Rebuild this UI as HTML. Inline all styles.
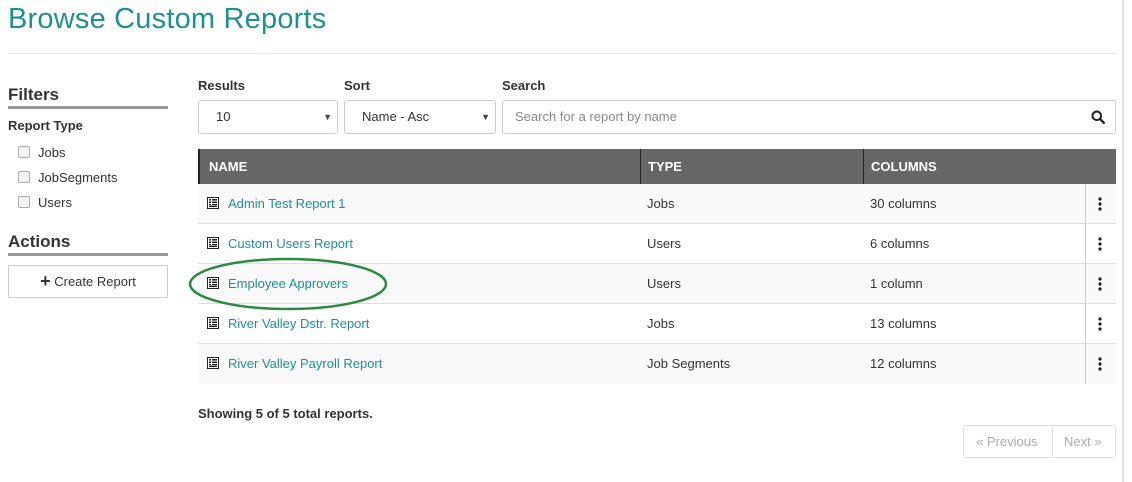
<!DOCTYPE html>
<html><head><meta charset="utf-8"><style>
*{box-sizing:border-box;margin:0;padding:0}
body{width:1132px;height:482px;background:#fff;font-family:"Liberation Sans",sans-serif;color:#333;position:relative;overflow:hidden;font-size:13px}
.a{position:absolute}
h1{position:absolute;left:8px;top:3px;font-weight:normal;font-size:29px;color:#1f8f96;letter-spacing:0.2px}
.hr{left:8px;top:53px;width:1108px;height:1px;background:#e6e6e6}
.vr{left:1122px;top:0;width:2px;height:482px;background:#e0e0e0}
.sec{font-size:17px;font-weight:bold;color:#333;left:8px;width:160px;border-bottom:3px solid #999;padding-bottom:1px}
.cb{width:12px;height:12px;border:1px solid #aaa;border-radius:2px;background:#f4f4f4;left:18px}
.lbl{left:38px;font-size:13px}
.box{border:1px solid #ccc;border-radius:3px;background:#fff}
.th{background:#666;color:#fff;font-weight:bold;font-size:13px;top:149px;height:35px;line-height:35px}
.row{left:198px;width:918px;height:40px;border-bottom:1px solid #ddd}
.cell{line-height:40px;font-size:13px}
.link{color:#1f8f96}
</style></head><body>
<h1>Browse Custom Reports</h1>
<div class="a hr"></div>
<div class="a vr"></div>

<div class="a sec" style="top:85px">Filters</div>
<div class="a" style="left:8px;top:118px;font-weight:bold;font-size:13px">Report Type</div>
<div class="a cb" style="top:146px"></div><div class="a lbl" style="top:145px">Jobs</div>
<div class="a cb" style="top:171px"></div><div class="a lbl" style="top:170px">JobSegments</div>
<div class="a cb" style="top:196px"></div><div class="a lbl" style="top:195px">Users</div>
<div class="a sec" style="top:232px">Actions</div>
<div class="a box" style="left:8px;top:265px;width:160px;height:33px;border-radius:0;text-align:center;line-height:31px;font-size:13px"><b style="font-size:18px;vertical-align:-1px">+</b> Create Report</div>

<div class="a" style="left:198px;top:78px;font-weight:bold">Results</div>
<div class="a" style="left:344px;top:78px;font-weight:bold">Sort</div>
<div class="a" style="left:502px;top:78px;font-weight:bold">Search</div>
<div class="a box" style="left:198px;top:100px;width:140px;height:34px;line-height:32px;padding-left:17px">10<span class="a" style="right:5px;top:0;font-size:9px;color:#444">▼</span></div>
<div class="a box" style="left:344px;top:100px;width:152px;height:34px;line-height:32px;padding-left:17px">Name - Asc<span class="a" style="right:5px;top:0;font-size:9px;color:#444">▼</span></div>
<div class="a box" style="left:502px;top:100px;width:614px;height:34px;line-height:32px;padding-left:12px;color:#888">Search for a report by name
<svg class="a" style="right:10px;top:9px" width="14" height="14" viewBox="0 0 14 14"><circle cx="5.8" cy="5.8" r="4.3" fill="none" stroke="#222" stroke-width="2"/><line x1="9" y1="9" x2="12.8" y2="12.8" stroke="#222" stroke-width="2.4" stroke-linecap="round"/></svg></div>

<div class="a th" style="left:198px;width:442px;padding-left:9px;border-left:2px solid #222">NAME</div>
<div class="a th" style="left:640px;width:223px;padding-left:7px;border-left:1px solid #222">TYPE</div>
<div class="a th" style="left:863px;width:253px;padding-left:7px;border-left:1px solid #222">COLUMNS</div>

<div class="a row" style="top:184px;background:#f9f9f9"></div>
<div class="a row" style="top:224px;background:#fff"></div>
<div class="a row" style="top:264px;background:#f9f9f9"></div>
<div class="a row" style="top:304px;background:#fff"></div>
<div class="a row" style="top:344px;background:#f9f9f9;border-bottom:none"></div>
<div class="a" style="left:1085px;top:184px;width:1px;height:200px;background:#ccc"></div>

<svg width="0" height="0" style="position:absolute"><defs><symbol id="ic" viewBox="0 0 12 12"><rect x="0.5" y="0.5" width="11" height="11" fill="#fff" stroke="#222"/><rect x="2" y="2" width="2" height="1.5" fill="#222"/><rect x="5" y="2" width="5" height="1.5" fill="#222"/><rect x="2" y="4.5" width="2" height="1.5" fill="#222"/><rect x="5" y="4.5" width="5" height="1.5" fill="#222"/><rect x="2" y="7" width="2" height="1.5" fill="#222"/><rect x="5" y="7" width="5" height="1.5" fill="#222"/><rect x="2" y="9" width="8" height="1" fill="#222"/></symbol>
<symbol id="dt" viewBox="0 0 4 14"><circle cx="2" cy="2" r="1.6" fill="#222"/><circle cx="2" cy="7" r="1.6" fill="#222"/><circle cx="2" cy="12" r="1.6" fill="#222"/></symbol></defs></svg>

<div class="a" style="left:0;top:184px;width:1132px">
 <svg class="a" style="left:207px;top:13px" width="12" height="12"><use href="#ic"/></svg>
 <div class="a cell link" style="left:228px">Admin Test Report 1</div><div class="a cell" style="left:647px">Jobs</div><div class="a cell" style="left:870px">30 columns</div>
 <svg class="a" style="left:1098px;top:13px" width="4" height="14"><use href="#dt"/></svg>
</div>
<div class="a" style="left:0;top:224px;width:1132px">
 <svg class="a" style="left:207px;top:13px" width="12" height="12"><use href="#ic"/></svg>
 <div class="a cell link" style="left:228px">Custom Users Report</div><div class="a cell" style="left:647px">Users</div><div class="a cell" style="left:870px">6 columns</div>
 <svg class="a" style="left:1098px;top:13px" width="4" height="14"><use href="#dt"/></svg>
</div>
<div class="a" style="left:0;top:264px;width:1132px">
 <svg class="a" style="left:207px;top:13px" width="12" height="12"><use href="#ic"/></svg>
 <div class="a cell link" style="left:228px">Employee Approvers</div><div class="a cell" style="left:647px">Users</div><div class="a cell" style="left:870px">1 column</div>
 <svg class="a" style="left:1098px;top:13px" width="4" height="14"><use href="#dt"/></svg>
</div>
<div class="a" style="left:0;top:304px;width:1132px">
 <svg class="a" style="left:207px;top:13px" width="12" height="12"><use href="#ic"/></svg>
 <div class="a cell link" style="left:228px">River Valley Dstr. Report</div><div class="a cell" style="left:647px">Jobs</div><div class="a cell" style="left:870px">13 columns</div>
 <svg class="a" style="left:1098px;top:13px" width="4" height="14"><use href="#dt"/></svg>
</div>
<div class="a" style="left:0;top:344px;width:1132px">
 <svg class="a" style="left:207px;top:13px" width="12" height="12"><use href="#ic"/></svg>
 <div class="a cell link" style="left:228px">River Valley Payroll Report</div><div class="a cell" style="left:647px">Job Segments</div><div class="a cell" style="left:870px">12 columns</div>
 <svg class="a" style="left:1098px;top:13px" width="4" height="14"><use href="#dt"/></svg>
</div>

<svg class="a" style="left:184px;top:254px" width="210" height="62"><ellipse cx="104" cy="30" rx="98" ry="25" fill="none" stroke="#2a8a43" stroke-width="2.5"/></svg>

<div class="a" style="left:198px;top:406px;font-weight:bold;font-size:13px">Showing 5 of 5 total reports.</div>
<div class="a" style="left:963px;top:425px;width:153px;height:33px;border:1px solid #e0e0e0;border-radius:3px;color:#aaa;font-size:13px;line-height:31px">
 <span class="a" style="left:12px">« Previous</span>
 <div class="a" style="left:88px;top:0;width:1px;height:31px;background:#e0e0e0"></div>
 <span class="a" style="left:100px">Next »</span>
</div>
</body></html>
